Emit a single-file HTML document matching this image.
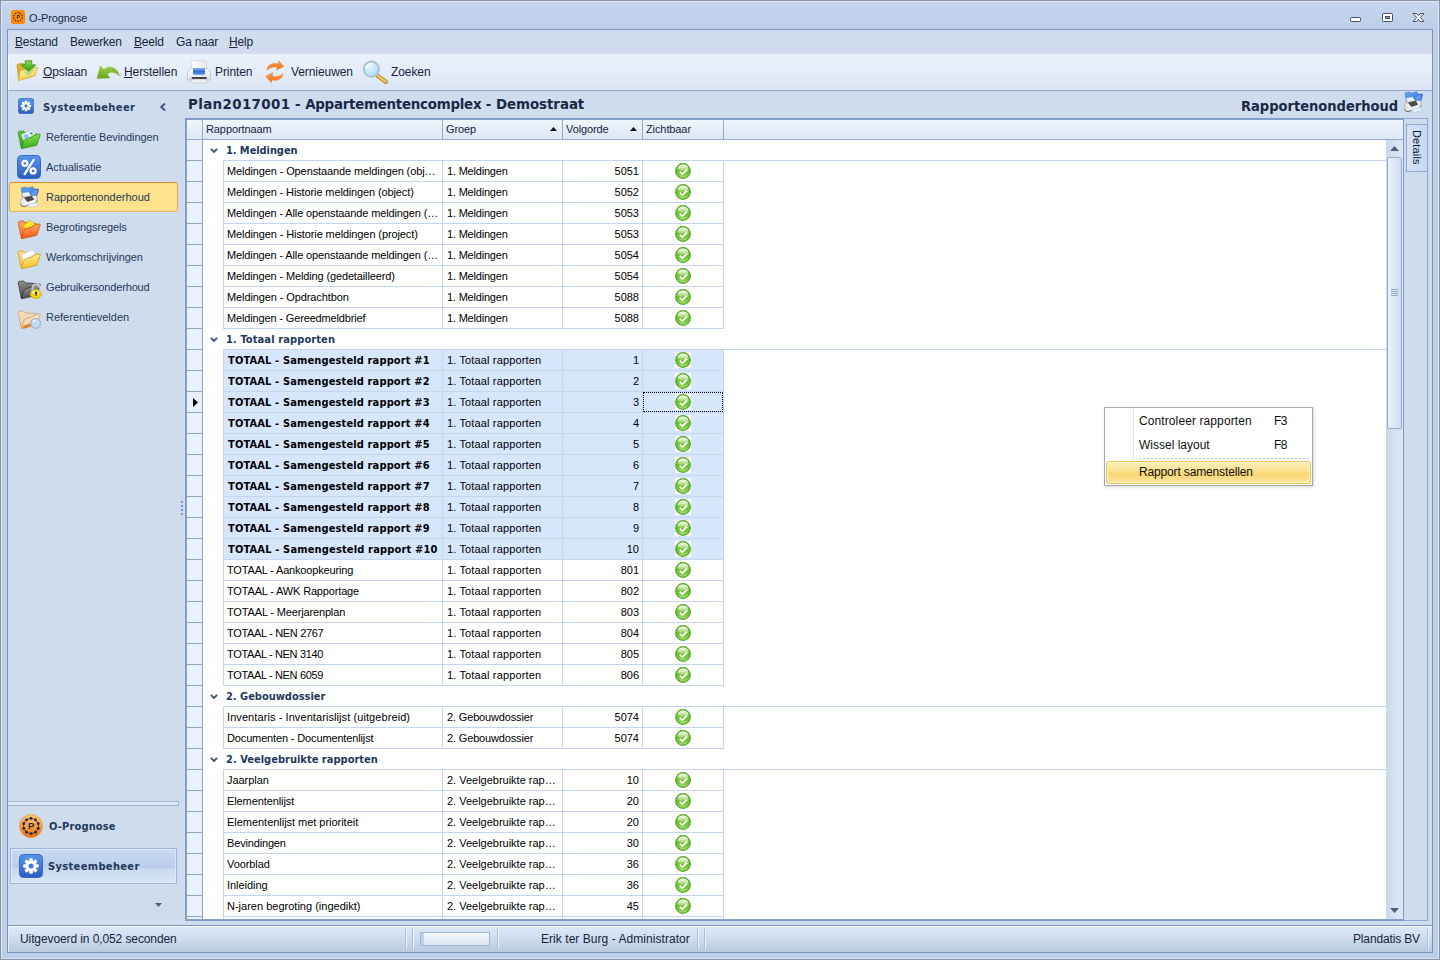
<!DOCTYPE html><html><head><meta charset="utf-8"><title>O-Prognose</title><style>
*{box-sizing:border-box;margin:0;padding:0}
html,body{width:1440px;height:960px;overflow:hidden}
body{position:relative;background:#c1d3eb;font-family:"Liberation Sans",sans-serif;font-size:11px;color:#000;-webkit-font-smoothing:antialiased}
.abs{position:absolute}
.t{position:absolute;white-space:nowrap;line-height:1}
.b{font-family:"DejaVu Sans Condensed","Liberation Sans",sans-serif;font-weight:bold}
#frame{position:absolute;left:0;top:0;width:1440px;height:960px;border:1px solid #8a94a4;background:linear-gradient(#c5d6ed 0,#bdcfe8 29px,#bdcfe8 100%)}
#frame:before{content:"";position:absolute;left:0;top:0;right:0;bottom:0;border:1px solid #dde7f5;border-bottom-color:#d3e0f1}
#inner{position:absolute;left:7px;top:29px;width:1426px;height:924px;border:1px solid #7896be;background:#cfdcee}
#menubar{position:absolute;left:8px;top:30px;width:1424px;height:24px;background:#d1ddee}
#toolbar{position:absolute;left:8px;top:54px;width:1424px;height:37px;background:linear-gradient(#eaf1fb 0,#e6eef9 40%,#dbe5f3 100%);border-bottom:1px solid #8fa7ca;border-left:1px solid #f4f8fd}
.menu{font-size:12px;color:#17233f;top:36px}
.tb{font-size:12px;color:#17233f;top:66px}
u{text-decoration:underline;text-underline-offset:1px}
#status{position:absolute;left:8px;top:925px;width:1424px;height:27px;border-top:1px solid #7896be;background:linear-gradient(#dee8f6 0,#d3dff0 40%,#c4d2e8 75%,#b9c9e2 100%);box-shadow:inset 0 1px 0 #f3f7fc,inset 1px 0 0 #e9f0f9}
.st{font-size:12px;color:#17233f;top:933px}
.vsep{position:absolute;top:928px;width:2px;height:21px;border-left:1px solid #a9bdd8;border-right:1px solid #eef3fa}
.nav{font-size:11px;color:#1e395b}
#sel{position:absolute;left:9px;top:182px;width:169px;height:30px;border:1px solid #e8a84a;border-top-color:#d98a30;border-bottom-color:#eeb758;border-radius:3px;background:#ffe28b}
#grid{position:absolute;left:185px;top:118px;width:1219px;height:803px;border:1px solid #7f9bc3;background:#fff}
#grid:before{content:"";position:absolute;left:0;top:0;right:0;bottom:0;border:1px solid #87a2c8;pointer-events:none}
#ghead{position:absolute;left:187px;top:120px;width:1216px;height:20px;background:linear-gradient(#f1f6fd 0,#e4edf9 55%,#dde8f6 100%);border-bottom:1px solid #93abcd}
.hc{position:absolute;top:120px;height:19px;border-right:1px solid #93abcd}
.ht{font-size:11px;color:#17233f;top:124px;letter-spacing:-.1px}
#ind{position:absolute;left:187px;top:140px;width:16px;height:779px;background:#eaf1fb;border-right:1px solid #8aa3c8}
.il{position:absolute;left:187px;width:15px;height:1px;background:#8aa3c8}
.gl{position:absolute;left:223px;width:1163px;height:1px;background:#c4d5f0}
.rl{position:absolute;left:223px;width:501px;height:1px;background:#c4d5f0}
.vl{position:absolute;width:1px;background:#c4d5f0}
.selbg{position:absolute;left:224px;width:499px;height:20px;background:#d6e6fc}
.gt{font-size:11px;color:#1e395b;left:226px}
.c{font-size:11px;color:#000}
.ck{position:absolute;left:675px;width:16px;height:16px}
#sb{position:absolute;left:1386px;top:140px;width:17px;height:779px;background:linear-gradient(90deg,#c9d8ec 0,#d6e2f1 50%,#dfe8f4 100%)}
#thumb{position:absolute;left:1387px;top:157px;width:15px;height:272px;border:1px solid #94acd0;border-radius:2px;background:linear-gradient(90deg,#e9f0fa 0,#dde7f5 50%,#cfdcf0 100%)}
#dstrip{position:absolute;left:1404px;top:118px;width:24px;height:803px;border:1px solid #8fa7ca;border-left:none;background:#cfdcee}
#dtab{position:absolute;left:1406px;top:124px;width:22px;height:48px;border:1px solid #8fa7ca;background:linear-gradient(90deg,#d6e3f6,#c5d8f3)}
#ctx{position:absolute;left:1104px;top:407px;width:209px;height:79px;border:1px solid #a4a9b0;background:#fff;box-shadow:1px 1px 3px rgba(0,0,0,.18)}
.cm{font-size:12px;color:#111}
</style></head><body>
<div id="frame"></div><div id="inner"></div>
<svg width="0" height="0" style="position:absolute">
<defs>
<linearGradient id="gGreen" x1="0" y1="0" x2="0" y2="1"><stop offset="0" stop-color="#c9ebb0"/><stop offset=".3" stop-color="#8fd157"/><stop offset=".55" stop-color="#67bf25"/><stop offset=".8" stop-color="#86d04c"/><stop offset="1" stop-color="#c3ea9e"/></linearGradient>
<linearGradient id="gGloss" x1="0" y1="0" x2="0" y2="1"><stop offset="0" stop-color="#fff" stop-opacity=".85"/><stop offset="1" stop-color="#fff" stop-opacity=".1"/></linearGradient>
<linearGradient id="gBlue" x1="0" y1="0" x2="0" y2="1"><stop offset="0" stop-color="#5b95ea"/><stop offset="1" stop-color="#2b5cbf"/></linearGradient>
<linearGradient id="gOr" x1="0" y1="0" x2="0" y2="1"><stop offset="0" stop-color="#ffb24a"/><stop offset="1" stop-color="#e8741a"/></linearGradient>


</defs></svg>
<svg class="abs" style="left:11px;top:10px" width="14" height="14" viewBox="0 0 14 14"><rect width="14" height="14" rx="2.5" fill="#ff8c00"/><g fill="#2a2a55"><circle cx="7.00" cy="2.70" r=".75"/><circle cx="9.53" cy="3.52" r=".75"/><circle cx="11.09" cy="5.67" r=".75"/><circle cx="11.09" cy="8.33" r=".75"/><circle cx="9.53" cy="10.48" r=".75"/><circle cx="7.00" cy="11.30" r=".75"/><circle cx="4.47" cy="10.48" r=".75"/><circle cx="2.91" cy="8.33" r=".75"/><circle cx="2.91" cy="5.67" r=".75"/><circle cx="4.47" cy="3.52" r=".75"/></g><text x="7.1" y="8.8" font-size="5" font-weight="bold" text-anchor="middle" fill="#2a2a55" font-family="Liberation Sans, sans-serif">P</text></svg>
<span class="t" style="left:29px;top:13px;font-size:11px;letter-spacing:-.1px;color:#1a2848">O-Prognose</span>
<svg class="abs" style="left:1349px;top:12px" width="78" height="12" viewBox="0 0 78 12"><g fill="#fff" stroke="#4a4a66" stroke-width="1"><rect x="1.5" y="5.5" width="10" height="4" rx="1"/><rect x="33.5" y="1.5" width="10" height="8" rx="1"/><rect x="36.5" y="4.5" width="4" height="2" fill="#8fa3c4"/></g><path d="M64 1.5 h3.7 l1.8 2.1 l1.8-2.1 h3.7 l-3.7 4 l3.7 4 h-3.7 l-1.8-2.1 l-1.8 2.1 h-3.7 l3.7-4z" fill="#fff" stroke="#4a4a66" stroke-width="1" stroke-linejoin="round"/></svg>
<div id="menubar"></div>
<span class="t menu" style="left:15px;letter-spacing:-.2px"><u>B</u>estand</span>
<span class="t menu" style="left:70px;letter-spacing:-.2px">Bewerken</span>
<span class="t menu" style="left:134px;letter-spacing:-.2px"><u>B</u>eeld</span>
<span class="t menu" style="left:176px;letter-spacing:-.2px">Ga naar</span>
<span class="t menu" style="left:229px;letter-spacing:-.2px"><u>H</u>elp</span>
<div id="toolbar"></div>
<span class="t tb" style="left:43px;letter-spacing:-.08px"><u>O</u>pslaan</span>
<span class="t tb" style="left:124px;letter-spacing:-.08px"><u>H</u>erstellen</span>
<span class="t tb" style="left:215px;letter-spacing:-.08px">Printen</span>
<span class="t tb" style="left:291px;letter-spacing:-.08px">Vernieuwen</span>
<span class="t tb" style="left:391px;letter-spacing:-.08px">Zoeken</span>
<svg class="abs" style="left:15px;top:59px" width="26" height="24" viewBox="0 0 26 24">
<defs><linearGradient id="fy" x1="0" y1="0" x2=".4" y2="1"><stop offset="0" stop-color="#fff7b8"/><stop offset=".6" stop-color="#fbe27a"/><stop offset="1" stop-color="#eebf3a"/></linearGradient>
<linearGradient id="ga" x1="0" y1="0" x2="0" y2="1"><stop offset="0" stop-color="#86e052"/><stop offset="1" stop-color="#2a9a10"/></linearGradient></defs>
<path d="M2 6.2 Q2 5.3 2.9 5.1 L8 4.3 L10 6 L17.5 6.5 L17.5 12 L3.6 21.3z" fill="#dfae2f" stroke="#c6961f" stroke-width=".7" stroke-linejoin="round"/>
<path d="M3.4 21.6 L5 12.4 Q5.1 11.7 5.9 11.5 L22 8.2 Q22.9 8.1 22.6 9 L20.2 16.2 Q20 16.9 19.2 17.2z" fill="url(#fy)" stroke="#d3a62e" stroke-width=".7" stroke-linejoin="round"/>
<path d="M8.6 12.6 L13.4 17 L20.3 9.4 L18.4 9.6 L13.5 14 L10.3 12z" fill="#a2e072" opacity=".9"/>
<path d="M10.2 1.8 h6.6 v4.1 h4 L13.6 12.6 L6.3 5.9 H10.2z" fill="url(#ga)" stroke="#2c8a12" stroke-width=".8" stroke-linejoin="round"/>
</svg>
<svg class="abs" style="left:95px;top:62px" width="26" height="20" viewBox="0 0 26 20">
<defs><linearGradient id="gu" x1="0" y1="0" x2="0" y2="1"><stop offset="0" stop-color="#9bcf45"/><stop offset="1" stop-color="#69a61c"/></linearGradient></defs>
<path d="M5.4 4.2 L2 16.5 L14.8 15.9 L12.2 12 C15 9.6 20 9.2 24.3 13.8 C22.6 6 15 2.4 9 7.5 Z" fill="url(#gu)" stroke="#72ad22" stroke-width=".5" stroke-linejoin="round"/>
</svg>
<svg class="abs" style="left:187px;top:60px" width="24" height="24" viewBox="0 0 24 24">
<defs><linearGradient id="pb" x1="0" y1="0" x2="0" y2="1"><stop offset="0" stop-color="#ffffff"/><stop offset="1" stop-color="#dfe2e7"/></linearGradient>
<linearGradient id="pbl" x1="0" y1="0" x2="0" y2="1"><stop offset="0" stop-color="#8bb9f3"/><stop offset=".5" stop-color="#2f6fd8"/><stop offset="1" stop-color="#5a97ea"/></linearGradient>
<linearGradient id="pp" x1="0" y1="0" x2="1" y2="0"><stop offset="0" stop-color="#ffffff"/><stop offset="1" stop-color="#e3e4e6"/></linearGradient></defs>
<rect x="4.7" y=".8" width="15" height="8.5" rx=".8" fill="url(#pp)" stroke="#d3d5d9" stroke-width=".7"/>
<path d="M4.2 8.6 H19.8 Q20.6 8.6 21.2 9.4 L23.4 12.3 Q23.7 12.8 23.7 13.4 V19 Q23.7 20 22.7 20 H1.3 Q.3 20 .3 19 V13.4 Q.3 12.8 .6 12.3 L2.8 9.4 Q3.4 8.6 4.2 8.6z" fill="url(#pb)" stroke="#b3b8c0" stroke-width=".8"/>
<rect x="6" y="8" width="12" height="6.8" rx="1" fill="url(#pbl)"/>
<rect x="4.7" y="17.2" width="15" height="1.9" fill="#1c1c1c"/>
<path d="M4.3 19.1 H19.9 L20.6 22.5 Q20.6 23 20 23 H4.4 Q3.8 23 3.8 22.5z" fill="#eceded" stroke="#c2c6cc" stroke-width=".7"/>
</svg>
<svg class="abs" style="left:264px;top:60px" width="22" height="24" viewBox="0 0 22 24">
<defs><linearGradient id="gr" x1="0" y1="0" x2="0" y2="1"><stop offset="0" stop-color="#fa9a44"/><stop offset="1" stop-color="#ee7420"/></linearGradient></defs>
<path d="M2.9 10 C3.6 4.6 9 2.4 14.2 4 L14.7 .9 L19.9 6.4 L12.6 9.9 L13.2 7.3 C9.4 6.3 5.9 7.4 2.9 10z" fill="url(#gr)" stroke="#ee7a26" stroke-width=".5" stroke-linejoin="round"/>
<path d="M19 13.7 C18.3 19.2 13 21.3 7.9 19.7 L7.6 22.8 L1.7 16.4 L8.6 12.6 L8.4 16.3 C12.2 17.3 16 16.3 19 13.7z" fill="url(#gr)" stroke="#ee7a26" stroke-width=".5" stroke-linejoin="round"/>
</svg>
<svg class="abs" style="left:361px;top:59px" width="28" height="26" viewBox="0 0 28 26">
<defs><radialGradient id="lens" cx=".4" cy=".35" r=".75"><stop offset="0" stop-color="#eaf7ff"/><stop offset=".6" stop-color="#bfe2fa"/><stop offset="1" stop-color="#8fcaf2"/></radialGradient></defs>
<path d="M16 16.4 L24.8 22.8" stroke="#b5882c" stroke-width="4.2" stroke-linecap="round"/>
<path d="M16.8 16.8 L24.6 22.5" stroke="#f3c960" stroke-width="2.2" stroke-linecap="round"/>
<circle cx="10.4" cy="10.2" r="7.7" fill="url(#lens)" stroke="#b0c1cf" stroke-width="1.8"/>
<path d="M5.2 8.4 Q7 4.6 11 4.7" fill="none" stroke="#fff" stroke-width="1.5" stroke-linecap="round" opacity=".95"/>
</svg>
<svg class="abs" style="left:18px;top:98px" width="16" height="16" viewBox="0 0 24 24"><rect x=".5" y=".5" width="23" height="23" rx="4" fill="url(#gBlue)" stroke="#3667c4" stroke-width="1"/><g fill="#fff"><circle cx="12" cy="12" r="5.2"/><g><rect x="10.2" y="4.2" width="3.6" height="15.6" rx=".8"/><rect x="10.2" y="4.2" width="3.6" height="15.6" rx=".8" transform="rotate(45 12 12)"/><rect x="10.2" y="4.2" width="3.6" height="15.6" rx=".8" transform="rotate(90 12 12)"/><rect x="10.2" y="4.2" width="3.6" height="15.6" rx=".8" transform="rotate(135 12 12)"/></g></g><circle cx="12" cy="12" r="2.5" fill="#3f77d6"/></svg>
<span class="t b" style="left:43px;top:102px;font-size:11px;color:#1e395b;letter-spacing:.4px">Systeembeheer</span>
<svg class="abs" style="left:159px;top:102px" width="8" height="10" viewBox="0 0 8 10"><path d="M6 1.5 L2.2 5 L6 8.5" fill="none" stroke="#3d5275" stroke-width="1.8"/></svg>
<div id="sel"></div>
<span class="t nav" style="left:46px;top:132px;letter-spacing:-0.08px">Referentie Bevindingen</span>
<span class="t nav" style="left:46px;top:162px;letter-spacing:-0.08px">Actualisatie</span>
<span class="t nav" style="left:46px;top:192px;letter-spacing:0px">Rapportenonderhoud</span>
<span class="t nav" style="left:46px;top:222px;letter-spacing:-0.12px">Begrotingsregels</span>
<span class="t nav" style="left:46px;top:252px;letter-spacing:-0.12px">Werkomschrijvingen</span>
<span class="t nav" style="left:46px;top:282px;letter-spacing:-0.15px">Gebruikersonderhoud</span>
<span class="t nav" style="left:46px;top:312px;letter-spacing:0px">Referentievelden</span>
<svg class="abs" style="left:17px;top:125px" width="24" height="24" viewBox="0 0 24 24">
<defs><linearGradient id="f125" x1="0" y1="0" x2=".15" y2="1"><stop offset="0" stop-color="#8be05a"/><stop offset="1" stop-color="#3bb015"/></linearGradient>
<linearGradient id="f125b" x1="0" y1="0" x2="0" y2="1"><stop offset="0" stop-color="#5dc232"/><stop offset="1" stop-color="#3ca31a"/></linearGradient></defs>
<path d="M1.2 7.6 Q1.2 6.7 2.1 6.4 L6.2 6 Q7.1 6 7.6 6.8 L8.3 7.8 L19.4 8.6 L19 12.5 L6.8 17 L4.9 23.5 Q4.4 23.8 4.2 23z" fill="url(#f125b)" stroke="#2f8a12" stroke-width=".7" stroke-linejoin="round"/>
<path d="M4 9.8 L13.5 5.2 Q14.5 4.9 15.2 5.6 L19 9 L7 16.4z" fill="#eef6ff" stroke="#8fb0d4" stroke-width=".5" stroke-linejoin="round"/><path d="M6.2 10.6 L10.6 8.6 L12.4 11.8 L8 13.9z" fill="#8fc3f5"/><path d="M12.2 7.7 L15.6 7.2 L15 10.8z" fill="#2878dc"/><path d="M13.3 9.6 L16.6 8.2 L17.6 9.6 L14.5 11.2z" fill="#bfe59a"/>
<path d="M6.4 16.4 L8.6 13.9 L14.5 12 L18.9 9.6 L22.6 9 Q23.5 9 23.2 9.9 L20 19.6 Q19.8 20.2 19.1 20.4 L5.4 23.6 Q4.6 23.7 4.9 22.8z" fill="url(#f125)" stroke="#2f8a12" stroke-width=".7" stroke-linejoin="round"/>
</svg>
<svg class="abs" style="left:17px;top:155px" width="24" height="24" viewBox="0 0 24 24"><rect x=".5" y=".5" width="23" height="23" rx="4" fill="url(#gBlue)" stroke="#3667c4"/><g fill="none" stroke="#fff" stroke-width="2.2"><circle cx="7.9" cy="8.3" r="2.5"/><circle cx="16.1" cy="15.9" r="2.5"/><path d="M16.6 5 L7.6 19.2" stroke-linecap="round"/></g></svg>
<svg class="abs" style="left:20px;top:186px" width="20" height="22" viewBox="0 0 20 22">
<defs><linearGradient id="bf1" x1="0" y1="0" x2="1" y2="1"><stop offset="0" stop-color="#6aa8f4"/><stop offset="1" stop-color="#2f6ed6"/></linearGradient>
<linearGradient id="pg1" x1="0" y1="0" x2="1" y2="0"><stop offset="0" stop-color="#d9d9d9"/><stop offset=".35" stop-color="#f6f6f6"/><stop offset=".8" stop-color="#fdfdfd"/><stop offset="1" stop-color="#cfcfcf"/></linearGradient></defs>
<path d="M1.2 1.9 L5.9 1 L7.1 2.3 L12.7 .7 L14 2.9 L18.7 3.2 L17.1 9.6 L2.4 10.8z" fill="url(#bf1)" stroke="#2d67cf" stroke-width=".5" stroke-linejoin="round"/>
<path d="M10.2 6.6 L14.6 3.5 L18.2 3.6 L16.8 9.4 L12 9.8z" fill="#5c9bf0" stroke="#2557c0" stroke-width=".5" stroke-linejoin="round"/>
<path d="M2.1 7.3 L8.7 6 L11 9.8 L3.4 11.2z" fill="#e9f3ff" stroke="#b9d3f3" stroke-width=".4"/>
<path d="M.3 17.9 L.3 13.6 Q.4 12.5 1.4 12.2 L11.5 9.7 L15.7 9.7 Q16.9 9.8 17.2 11 L17.5 15.6 Q17.4 16.3 16.6 16.6 L7.4 19.5 L3.3 20.5 Q2.6 20.6 2 20z" fill="url(#pg1)" stroke="#9a9a9a" stroke-width=".5" stroke-linejoin="round"/>
<path d="M.3 17.5 L2 19.6 Q2.8 20.4 3.6 20.2 L7.4 19.3 L7.4 20 L3.3 21 Q2.4 21 1.8 20.3 L.3 18.4z" fill="#555"/>
<path d="M4.3 11.7 L11.8 10.1 L14 13.5 L7.4 15.7z" fill="#4a4a4a" stroke="#333" stroke-width=".4" stroke-linejoin="round"/>
<path d="M7.4 18.4 L15.9 16.8 L18.6 19.4 L10.3 21.6z" fill="#eaf4ff" stroke="#9fb9d8" stroke-width=".5" stroke-linejoin="round"/>
<circle cx="16.4" cy="15.2" r=".8" fill="#2fd02f"/>
</svg>
<svg class="abs" style="left:17px;top:215px" width="24" height="24" viewBox="0 0 24 24">
<defs><linearGradient id="f215" x1="0" y1="0" x2=".15" y2="1"><stop offset="0" stop-color="#fbb072"/><stop offset="1" stop-color="#ff5a14"/></linearGradient>
<linearGradient id="f215b" x1="0" y1="0" x2="0" y2="1"><stop offset="0" stop-color="#ffa468"/><stop offset="1" stop-color="#ff6a1c"/></linearGradient></defs>
<path d="M1.2 7.6 Q1.2 6.7 2.1 6.4 L6.2 6 Q7.1 6 7.6 6.8 L8.3 7.8 L19.4 8.6 L19 12.5 L6.8 17 L4.9 23.5 Q4.4 23.8 4.2 23z" fill="url(#f215b)" stroke="#b9500c" stroke-width=".7" stroke-linejoin="round"/>
<path d="M6.1 10.4 L10.1 7.9 L12.6 4.5 L14.5 6.7 L18.9 9.2 L14.5 11.7 L12 13.8 L7.9 13.4z" fill="#ffe91e" stroke="#e9960c" stroke-width=".5" stroke-linejoin="round"/>
<path d="M6.4 16.4 L8.6 13.9 L14.5 12 L18.9 9.6 L22.6 9 Q23.5 9 23.2 9.9 L20 19.6 Q19.8 20.2 19.1 20.4 L5.4 23.6 Q4.6 23.7 4.9 22.8z" fill="url(#f215)" stroke="#b9500c" stroke-width=".7" stroke-linejoin="round"/>
</svg>
<svg class="abs" style="left:17px;top:245px" width="24" height="24" viewBox="0 0 24 24">
<defs><linearGradient id="f245" x1="0" y1="0" x2=".15" y2="1"><stop offset="0" stop-color="#fff3a4"/><stop offset="1" stop-color="#f6bf22"/></linearGradient>
<linearGradient id="f245b" x1="0" y1="0" x2="0" y2="1"><stop offset="0" stop-color="#ffe57a"/><stop offset="1" stop-color="#f6c42a"/></linearGradient></defs>
<path d="M1.2 7.6 Q1.2 6.7 2.1 6.4 L6.2 6 Q7.1 6 7.6 6.8 L8.3 7.8 L19.4 8.6 L19 12.5 L6.8 17 L4.9 23.5 Q4.4 23.8 4.2 23z" fill="url(#f245b)" stroke="#c98f12" stroke-width=".7" stroke-linejoin="round"/>
<path d="M4.2 9.5 L15.75 4.8 L18.9 8.9 L6.4 16.4z" fill="#f4f4f4" stroke="#c4c4c4" stroke-width=".5" stroke-linejoin="round"/><path d="M5 10 L15.4 5.8 L17 8 L6.6 13z" fill="#fff"/>
<path d="M6.4 16.4 L8.6 13.9 L14.5 12 L18.9 9.6 L22.6 9 Q23.5 9 23.2 9.9 L20 19.6 Q19.8 20.2 19.1 20.4 L5.4 23.6 Q4.6 23.7 4.9 22.8z" fill="url(#f245)" stroke="#c98f12" stroke-width=".7" stroke-linejoin="round"/>
</svg>
<svg class="abs" style="left:17px;top:275px" width="24" height="24" viewBox="0 0 24 24">
<defs><linearGradient id="f275" x1="0" y1="0" x2=".15" y2="1"><stop offset="0" stop-color="#a6a6a6"/><stop offset="1" stop-color="#4c4c4c"/></linearGradient>
<linearGradient id="f275b" x1="0" y1="0" x2="0" y2="1"><stop offset="0" stop-color="#8c8c8c"/><stop offset="1" stop-color="#4a4a4a"/></linearGradient></defs>
<path d="M1.2 7.6 Q1.2 6.7 2.1 6.4 L6.2 6 Q7.1 6 7.6 6.8 L8.3 7.8 L19.4 8.6 L19 12.5 L6.8 17 L4.9 23.5 Q4.4 23.8 4.2 23z" fill="url(#f275b)" stroke="#2a2a2a" stroke-width=".7" stroke-linejoin="round"/>

<path d="M6.4 16.4 L8.6 13.9 L14.5 12 L18.9 9.6 L22.6 9 Q23.5 9 23.2 9.9 L20 19.6 Q19.8 20.2 19.1 20.4 L5.4 23.6 Q4.6 23.7 4.9 22.8z" fill="url(#f275)" stroke="#2a2a2a" stroke-width=".7" stroke-linejoin="round"/>
</svg>
<svg class="abs" style="left:29px;top:283px" width="14" height="16" viewBox="0 0 14 16"><path d="M3.6 8 V5.4 Q3.6 1.6 7.2 1.6 Q10.6 1.6 10.6 5" fill="none" stroke="#d4d6d9" stroke-width="2"/><path d="M3.6 8 V5.4 Q3.6 1.6 7.2 1.6 Q10.6 1.6 10.6 5" fill="none" stroke="#9a9ea4" stroke-width=".6"/><ellipse cx="6.8" cy="11" rx="5.5" ry="4.5" fill="#f4d516" stroke="#c9a208" stroke-width=".7"/><ellipse cx="6.2" cy="9" rx="3.4" ry="1.6" fill="#fff19a" opacity=".8"/><rect x="6.4" y="9.2" width="1.3" height="3.4" fill="#222"/><circle cx="7" cy="9.6" r="1.1" fill="#222"/></svg>
<svg class="abs" style="left:17px;top:305px" width="24" height="24" viewBox="0 0 24 24">
<defs><linearGradient id="f305" x1="0" y1="0" x2=".15" y2="1"><stop offset="0" stop-color="#fde9d2"/><stop offset="1" stop-color="#f0c9a0"/></linearGradient>
<linearGradient id="f305b" x1="0" y1="0" x2="0" y2="1"><stop offset="0" stop-color="#f9dcc0"/><stop offset="1" stop-color="#ecc49a"/></linearGradient></defs>
<path d="M1.2 7.6 Q1.2 6.7 2.1 6.4 L6.2 6 Q7.1 6 7.6 6.8 L8.3 7.8 L19.4 8.6 L19 12.5 L6.8 17 L4.9 23.5 Q4.4 23.8 4.2 23z" fill="url(#f305b)" stroke="#c39a70" stroke-width=".7" stroke-linejoin="round"/>

<path d="M6.4 16.4 L8.6 13.9 L14.5 12 L18.9 9.6 L22.6 9 Q23.5 9 23.2 9.9 L20 19.6 Q19.8 20.2 19.1 20.4 L5.4 23.6 Q4.6 23.7 4.9 22.8z" fill="url(#f305)" stroke="#c39a70" stroke-width=".7" stroke-linejoin="round"/>
</svg>
<svg class="abs" style="left:18px;top:316px" width="24" height="16" viewBox="0 0 24 16"><path d="M13 8.6 L6.3 11" stroke="#e07a22" stroke-width="2.6" stroke-linecap="round"/><circle cx="17.7" cy="7.4" r="4.8" fill="#b9e0fb" stroke="#a9b5c4" stroke-width="1.4"/><path d="M14.8 5.8 Q16 3.8 18.2 4" stroke="#fff" stroke-width="1.1" fill="none" stroke-linecap="round"/></svg>
<div class="abs" style="left:8px;top:801px;width:171px;height:5px;border:1px solid #9cb3d4;border-left:none;background:#dfe8f5"></div>
<svg class="abs" style="left:19px;top:814px" width="24" height="24" viewBox="0 0 24 24"><defs><linearGradient id="og" x1="0" y1="0" x2="0" y2="1"><stop offset="0" stop-color="#ffc677"/><stop offset=".55" stop-color="#f79a35"/><stop offset="1" stop-color="#e8720f"/></linearGradient></defs><circle cx="12" cy="12" r="11.5" fill="url(#og)" stroke="#e28a33" stroke-width=".6"/><circle cx="12" cy="12" r="7.6" fill="none" stroke="#26264a" stroke-width=".7"/><g fill="#26264a"><circle cx="12.00" cy="4.40" r="1.45"/><circle cx="16.47" cy="5.85" r="1.45"/><circle cx="19.23" cy="9.65" r="1.45"/><circle cx="19.23" cy="14.35" r="1.45"/><circle cx="16.47" cy="18.15" r="1.45"/><circle cx="12.00" cy="19.60" r="1.45"/><circle cx="7.53" cy="18.15" r="1.45"/><circle cx="4.77" cy="14.35" r="1.45"/><circle cx="4.77" cy="9.65" r="1.45"/><circle cx="7.53" cy="5.85" r="1.45"/></g><text x="12.2" y="15.3" font-size="9.5" font-weight="bold" text-anchor="middle" fill="#26264a" font-family="Liberation Sans, sans-serif">P</text></svg>
<span class="t b" style="left:49px;top:821px;font-size:11px;color:#1e395b;letter-spacing:.15px">O-Prognose</span>
<div class="abs" style="left:10px;top:848px;width:167px;height:36px;border:1px solid #9fb6d8;background:linear-gradient(#cadbf2 0,#b8cdea 54%,#c9dbf2 60%,#dae6f6 100%);box-shadow:inset 0 0 0 1px #dde8f8"></div>
<svg class="abs" style="left:19px;top:854px" width="24" height="24" viewBox="0 0 24 24"><rect x=".5" y=".5" width="23" height="23" rx="4" fill="url(#gBlue)" stroke="#3667c4" stroke-width="1"/><g fill="#fff"><circle cx="12" cy="12" r="5.2"/><g><rect x="10.2" y="4.2" width="3.6" height="15.6" rx=".8"/><rect x="10.2" y="4.2" width="3.6" height="15.6" rx=".8" transform="rotate(45 12 12)"/><rect x="10.2" y="4.2" width="3.6" height="15.6" rx=".8" transform="rotate(90 12 12)"/><rect x="10.2" y="4.2" width="3.6" height="15.6" rx=".8" transform="rotate(135 12 12)"/></g></g><circle cx="12" cy="12" r="2.5" fill="#3f77d6"/></svg>
<span class="t b" style="left:48px;top:861px;font-size:11px;color:#1e395b;letter-spacing:.35px">Systeembeheer</span>
<svg class="abs" style="left:155px;top:903px" width="7" height="4" viewBox="0 0 7 4"><path d="M0 0 H7 L3.5 4z" fill="#4d5f80"/></svg>
<div class="abs" style="left:181px;top:501px;width:2px;height:2px;background:#7d98be"></div>
<div class="abs" style="left:181px;top:505px;width:2px;height:2px;background:#7d98be"></div>
<div class="abs" style="left:181px;top:509px;width:2px;height:2px;background:#7d98be"></div>
<div class="abs" style="left:181px;top:513px;width:2px;height:2px;background:#7d98be"></div>
<span class="t b" style="left:188px;top:97px;font-size:14.9px;color:#1a2848;letter-spacing:-.06px"><span style="letter-spacing:.38px">Plan2017001</span> - <span style="letter-spacing:-.26px">Appartementencomplex</span> - Demostraat</span>
<span class="t b" style="left:1241px;top:99px;font-size:14.5px;color:#1a2848">Rapportenonderhoud</span>
<svg class="abs" style="left:1404px;top:91px" width="20" height="22" viewBox="0 0 20 22">
<defs><linearGradient id="bf2" x1="0" y1="0" x2="1" y2="1"><stop offset="0" stop-color="#6aa8f4"/><stop offset="1" stop-color="#2f6ed6"/></linearGradient>
<linearGradient id="pg2" x1="0" y1="0" x2="1" y2="0"><stop offset="0" stop-color="#d9d9d9"/><stop offset=".35" stop-color="#f6f6f6"/><stop offset=".8" stop-color="#fdfdfd"/><stop offset="1" stop-color="#cfcfcf"/></linearGradient></defs>
<path d="M1.2 1.9 L5.9 1 L7.1 2.3 L12.7 .7 L14 2.9 L18.7 3.2 L17.1 9.6 L2.4 10.8z" fill="url(#bf2)" stroke="#2d67cf" stroke-width=".5" stroke-linejoin="round"/>
<path d="M10.2 6.6 L14.6 3.5 L18.2 3.6 L16.8 9.4 L12 9.8z" fill="#5c9bf0" stroke="#2557c0" stroke-width=".5" stroke-linejoin="round"/>
<path d="M2.1 7.3 L8.7 6 L11 9.8 L3.4 11.2z" fill="#e9f3ff" stroke="#b9d3f3" stroke-width=".4"/>
<path d="M.3 17.9 L.3 13.6 Q.4 12.5 1.4 12.2 L11.5 9.7 L15.7 9.7 Q16.9 9.8 17.2 11 L17.5 15.6 Q17.4 16.3 16.6 16.6 L7.4 19.5 L3.3 20.5 Q2.6 20.6 2 20z" fill="url(#pg2)" stroke="#9a9a9a" stroke-width=".5" stroke-linejoin="round"/>
<path d="M.3 17.5 L2 19.6 Q2.8 20.4 3.6 20.2 L7.4 19.3 L7.4 20 L3.3 21 Q2.4 21 1.8 20.3 L.3 18.4z" fill="#555"/>
<path d="M4.3 11.7 L11.8 10.1 L14 13.5 L7.4 15.7z" fill="#4a4a4a" stroke="#333" stroke-width=".4" stroke-linejoin="round"/>
<path d="M7.4 18.4 L15.9 16.8 L18.6 19.4 L10.3 21.6z" fill="#eaf4ff" stroke="#9fb9d8" stroke-width=".5" stroke-linejoin="round"/>
<circle cx="16.4" cy="15.2" r=".8" fill="#2fd02f"/>
</svg>
<div id="grid"></div><div id="ghead"></div>
<div class="hc" style="left:187px;width:16px"></div>
<div class="hc" style="left:203px;width:240px"></div>
<div class="hc" style="left:443px;width:120px"></div>
<div class="hc" style="left:563px;width:80px"></div>
<div class="hc" style="left:643px;width:81px"></div>
<span class="t ht" style="left:206px">Rapportnaam</span>
<span class="t ht" style="left:446px">Groep</span>
<span class="t ht" style="left:566px">Volgorde</span>
<span class="t ht" style="left:646px">Zichtbaar</span>
<svg class="abs" style="left:550px;top:127px" width="7" height="4" viewBox="0 0 7 4"><path d="M3.5 0 L7 4 H0z" fill="#111"/></svg>
<svg class="abs" style="left:630px;top:127px" width="7" height="4" viewBox="0 0 7 4"><path d="M3.5 0 L7 4 H0z" fill="#111"/></svg>
<div id="ind"></div>
<svg class="abs" style="left:210px;top:148px" width="8" height="6" viewBox="0 0 8 6"><path d="M.9 .8 L4 4 L7.1 .8" fill="none" stroke="#3f5375" stroke-width="1.9"/></svg>
<span class="t b gt" style="top:145px;letter-spacing:-0.077px">1. Meldingen</span>
<div class="gl" style="top:160px"></div>
<div class="il" style="top:160px"></div>
<span class="t c" style="left:227px;top:166px;letter-spacing:-0.113px">Meldingen - Openstaande meldingen (obj…</span>
<span class="t c" style="left:447px;top:166px;letter-spacing:-0.2px">1. Meldingen</span>
<span class="t c" style="right:801px;top:166px">5051</span>
<svg class="ck" style="top:163px" viewBox="0 0 16 16"><rect width="16" height="16" fill="#fff"/><circle cx="8" cy="8" r="7.25" fill="url(#gGreen)" stroke="#57a724" stroke-width="1.3"/><ellipse cx="8" cy="4.9" rx="5" ry="3.3" fill="url(#gGloss)"/><path d="M4.7 8.6 L7.3 11.1 L12.2 6.5" fill="none" stroke="#fff" stroke-width="1.8" stroke-linecap="butt" stroke-linejoin="miter"/></svg>
<div class="rl" style="top:181px"></div>
<div class="il" style="top:181px"></div>
<span class="t c" style="left:227px;top:187px;letter-spacing:-0.12px">Meldingen - Historie meldingen (object)</span>
<span class="t c" style="left:447px;top:187px;letter-spacing:-0.2px">1. Meldingen</span>
<span class="t c" style="right:801px;top:187px">5052</span>
<svg class="ck" style="top:184px" viewBox="0 0 16 16"><rect width="16" height="16" fill="#fff"/><circle cx="8" cy="8" r="7.25" fill="url(#gGreen)" stroke="#57a724" stroke-width="1.3"/><ellipse cx="8" cy="4.9" rx="5" ry="3.3" fill="url(#gGloss)"/><path d="M4.7 8.6 L7.3 11.1 L12.2 6.5" fill="none" stroke="#fff" stroke-width="1.8" stroke-linecap="butt" stroke-linejoin="miter"/></svg>
<div class="rl" style="top:202px"></div>
<div class="il" style="top:202px"></div>
<span class="t c" style="left:227px;top:208px;letter-spacing:-0.131px">Meldingen - Alle openstaande meldingen (…</span>
<span class="t c" style="left:447px;top:208px;letter-spacing:-0.2px">1. Meldingen</span>
<span class="t c" style="right:801px;top:208px">5053</span>
<svg class="ck" style="top:205px" viewBox="0 0 16 16"><rect width="16" height="16" fill="#fff"/><circle cx="8" cy="8" r="7.25" fill="url(#gGreen)" stroke="#57a724" stroke-width="1.3"/><ellipse cx="8" cy="4.9" rx="5" ry="3.3" fill="url(#gGloss)"/><path d="M4.7 8.6 L7.3 11.1 L12.2 6.5" fill="none" stroke="#fff" stroke-width="1.8" stroke-linecap="butt" stroke-linejoin="miter"/></svg>
<div class="rl" style="top:223px"></div>
<div class="il" style="top:223px"></div>
<span class="t c" style="left:227px;top:229px;letter-spacing:-0.108px">Meldingen - Historie meldingen (project)</span>
<span class="t c" style="left:447px;top:229px;letter-spacing:-0.2px">1. Meldingen</span>
<span class="t c" style="right:801px;top:229px">5053</span>
<svg class="ck" style="top:226px" viewBox="0 0 16 16"><rect width="16" height="16" fill="#fff"/><circle cx="8" cy="8" r="7.25" fill="url(#gGreen)" stroke="#57a724" stroke-width="1.3"/><ellipse cx="8" cy="4.9" rx="5" ry="3.3" fill="url(#gGloss)"/><path d="M4.7 8.6 L7.3 11.1 L12.2 6.5" fill="none" stroke="#fff" stroke-width="1.8" stroke-linecap="butt" stroke-linejoin="miter"/></svg>
<div class="rl" style="top:244px"></div>
<div class="il" style="top:244px"></div>
<span class="t c" style="left:227px;top:250px;letter-spacing:-0.131px">Meldingen - Alle openstaande meldingen (…</span>
<span class="t c" style="left:447px;top:250px;letter-spacing:-0.2px">1. Meldingen</span>
<span class="t c" style="right:801px;top:250px">5054</span>
<svg class="ck" style="top:247px" viewBox="0 0 16 16"><rect width="16" height="16" fill="#fff"/><circle cx="8" cy="8" r="7.25" fill="url(#gGreen)" stroke="#57a724" stroke-width="1.3"/><ellipse cx="8" cy="4.9" rx="5" ry="3.3" fill="url(#gGloss)"/><path d="M4.7 8.6 L7.3 11.1 L12.2 6.5" fill="none" stroke="#fff" stroke-width="1.8" stroke-linecap="butt" stroke-linejoin="miter"/></svg>
<div class="rl" style="top:265px"></div>
<div class="il" style="top:265px"></div>
<span class="t c" style="left:227px;top:271px;letter-spacing:-0.135px">Meldingen - Melding (gedetailleerd)</span>
<span class="t c" style="left:447px;top:271px;letter-spacing:-0.2px">1. Meldingen</span>
<span class="t c" style="right:801px;top:271px">5054</span>
<svg class="ck" style="top:268px" viewBox="0 0 16 16"><rect width="16" height="16" fill="#fff"/><circle cx="8" cy="8" r="7.25" fill="url(#gGreen)" stroke="#57a724" stroke-width="1.3"/><ellipse cx="8" cy="4.9" rx="5" ry="3.3" fill="url(#gGloss)"/><path d="M4.7 8.6 L7.3 11.1 L12.2 6.5" fill="none" stroke="#fff" stroke-width="1.8" stroke-linecap="butt" stroke-linejoin="miter"/></svg>
<div class="rl" style="top:286px"></div>
<div class="il" style="top:286px"></div>
<span class="t c" style="left:227px;top:292px;letter-spacing:-0.106px">Meldingen - Opdrachtbon</span>
<span class="t c" style="left:447px;top:292px;letter-spacing:-0.2px">1. Meldingen</span>
<span class="t c" style="right:801px;top:292px">5088</span>
<svg class="ck" style="top:289px" viewBox="0 0 16 16"><rect width="16" height="16" fill="#fff"/><circle cx="8" cy="8" r="7.25" fill="url(#gGreen)" stroke="#57a724" stroke-width="1.3"/><ellipse cx="8" cy="4.9" rx="5" ry="3.3" fill="url(#gGloss)"/><path d="M4.7 8.6 L7.3 11.1 L12.2 6.5" fill="none" stroke="#fff" stroke-width="1.8" stroke-linecap="butt" stroke-linejoin="miter"/></svg>
<div class="rl" style="top:307px"></div>
<div class="il" style="top:307px"></div>
<span class="t c" style="left:227px;top:313px;letter-spacing:-0.147px">Meldingen - Gereedmeldbrief</span>
<span class="t c" style="left:447px;top:313px;letter-spacing:-0.2px">1. Meldingen</span>
<span class="t c" style="right:801px;top:313px">5088</span>
<svg class="ck" style="top:310px" viewBox="0 0 16 16"><rect width="16" height="16" fill="#fff"/><circle cx="8" cy="8" r="7.25" fill="url(#gGreen)" stroke="#57a724" stroke-width="1.3"/><ellipse cx="8" cy="4.9" rx="5" ry="3.3" fill="url(#gGloss)"/><path d="M4.7 8.6 L7.3 11.1 L12.2 6.5" fill="none" stroke="#fff" stroke-width="1.8" stroke-linecap="butt" stroke-linejoin="miter"/></svg>
<div class="rl" style="top:328px"></div>
<div class="il" style="top:328px"></div>
<div class="vl" style="left:223px;top:160px;height:169px"></div>
<div class="vl" style="left:442px;top:160px;height:169px"></div>
<div class="vl" style="left:562px;top:160px;height:169px"></div>
<div class="vl" style="left:642px;top:160px;height:169px"></div>
<div class="vl" style="left:723px;top:160px;height:169px"></div>
<svg class="abs" style="left:210px;top:337px" width="8" height="6" viewBox="0 0 8 6"><path d="M.9 .8 L4 4 L7.1 .8" fill="none" stroke="#3f5375" stroke-width="1.9"/></svg>
<span class="t b gt" style="top:334px;letter-spacing:0.111px">1. Totaal rapporten</span>
<div class="gl" style="top:349px"></div>
<div class="il" style="top:349px"></div>
<div class="selbg" style="top:350px"></div>
<span class="t b c" style="left:228px;top:355px;letter-spacing:0.135px">TOTAAL - Samengesteld rapport #1</span>
<span class="t c" style="left:447px;top:355px;letter-spacing:0.14px">1. Totaal rapporten</span>
<span class="t c" style="right:801px;top:355px">1</span>
<svg class="ck" style="top:352px" viewBox="0 0 16 16"><rect width="16" height="16" fill="#fff"/><circle cx="8" cy="8" r="7.25" fill="url(#gGreen)" stroke="#57a724" stroke-width="1.3"/><ellipse cx="8" cy="4.9" rx="5" ry="3.3" fill="url(#gGloss)"/><path d="M4.7 8.6 L7.3 11.1 L12.2 6.5" fill="none" stroke="#fff" stroke-width="1.8" stroke-linecap="butt" stroke-linejoin="miter"/></svg>
<div class="rl" style="top:370px"></div>
<div class="il" style="top:370px"></div>
<div class="selbg" style="top:371px"></div>
<span class="t b c" style="left:228px;top:376px;letter-spacing:0.135px">TOTAAL - Samengesteld rapport #2</span>
<span class="t c" style="left:447px;top:376px;letter-spacing:0.14px">1. Totaal rapporten</span>
<span class="t c" style="right:801px;top:376px">2</span>
<svg class="ck" style="top:373px" viewBox="0 0 16 16"><rect width="16" height="16" fill="#fff"/><circle cx="8" cy="8" r="7.25" fill="url(#gGreen)" stroke="#57a724" stroke-width="1.3"/><ellipse cx="8" cy="4.9" rx="5" ry="3.3" fill="url(#gGloss)"/><path d="M4.7 8.6 L7.3 11.1 L12.2 6.5" fill="none" stroke="#fff" stroke-width="1.8" stroke-linecap="butt" stroke-linejoin="miter"/></svg>
<div class="rl" style="top:391px"></div>
<div class="il" style="top:391px"></div>
<div class="selbg" style="top:392px"></div>
<span class="t b c" style="left:228px;top:397px;letter-spacing:0.135px">TOTAAL - Samengesteld rapport #3</span>
<span class="t c" style="left:447px;top:397px;letter-spacing:0.14px">1. Totaal rapporten</span>
<span class="t c" style="right:801px;top:397px">3</span>
<svg class="ck" style="top:394px" viewBox="0 0 16 16"><rect width="16" height="16" fill="#fff"/><circle cx="8" cy="8" r="7.25" fill="url(#gGreen)" stroke="#57a724" stroke-width="1.3"/><ellipse cx="8" cy="4.9" rx="5" ry="3.3" fill="url(#gGloss)"/><path d="M4.7 8.6 L7.3 11.1 L12.2 6.5" fill="none" stroke="#fff" stroke-width="1.8" stroke-linecap="butt" stroke-linejoin="miter"/></svg>
<div class="rl" style="top:412px"></div>
<div class="il" style="top:412px"></div>
<div class="selbg" style="top:413px"></div>
<span class="t b c" style="left:228px;top:418px;letter-spacing:0.135px">TOTAAL - Samengesteld rapport #4</span>
<span class="t c" style="left:447px;top:418px;letter-spacing:0.14px">1. Totaal rapporten</span>
<span class="t c" style="right:801px;top:418px">4</span>
<svg class="ck" style="top:415px" viewBox="0 0 16 16"><rect width="16" height="16" fill="#fff"/><circle cx="8" cy="8" r="7.25" fill="url(#gGreen)" stroke="#57a724" stroke-width="1.3"/><ellipse cx="8" cy="4.9" rx="5" ry="3.3" fill="url(#gGloss)"/><path d="M4.7 8.6 L7.3 11.1 L12.2 6.5" fill="none" stroke="#fff" stroke-width="1.8" stroke-linecap="butt" stroke-linejoin="miter"/></svg>
<div class="rl" style="top:433px"></div>
<div class="il" style="top:433px"></div>
<div class="selbg" style="top:434px"></div>
<span class="t b c" style="left:228px;top:439px;letter-spacing:0.135px">TOTAAL - Samengesteld rapport #5</span>
<span class="t c" style="left:447px;top:439px;letter-spacing:0.14px">1. Totaal rapporten</span>
<span class="t c" style="right:801px;top:439px">5</span>
<svg class="ck" style="top:436px" viewBox="0 0 16 16"><rect width="16" height="16" fill="#fff"/><circle cx="8" cy="8" r="7.25" fill="url(#gGreen)" stroke="#57a724" stroke-width="1.3"/><ellipse cx="8" cy="4.9" rx="5" ry="3.3" fill="url(#gGloss)"/><path d="M4.7 8.6 L7.3 11.1 L12.2 6.5" fill="none" stroke="#fff" stroke-width="1.8" stroke-linecap="butt" stroke-linejoin="miter"/></svg>
<div class="rl" style="top:454px"></div>
<div class="il" style="top:454px"></div>
<div class="selbg" style="top:455px"></div>
<span class="t b c" style="left:228px;top:460px;letter-spacing:0.135px">TOTAAL - Samengesteld rapport #6</span>
<span class="t c" style="left:447px;top:460px;letter-spacing:0.14px">1. Totaal rapporten</span>
<span class="t c" style="right:801px;top:460px">6</span>
<svg class="ck" style="top:457px" viewBox="0 0 16 16"><rect width="16" height="16" fill="#fff"/><circle cx="8" cy="8" r="7.25" fill="url(#gGreen)" stroke="#57a724" stroke-width="1.3"/><ellipse cx="8" cy="4.9" rx="5" ry="3.3" fill="url(#gGloss)"/><path d="M4.7 8.6 L7.3 11.1 L12.2 6.5" fill="none" stroke="#fff" stroke-width="1.8" stroke-linecap="butt" stroke-linejoin="miter"/></svg>
<div class="rl" style="top:475px"></div>
<div class="il" style="top:475px"></div>
<div class="selbg" style="top:476px"></div>
<span class="t b c" style="left:228px;top:481px;letter-spacing:0.135px">TOTAAL - Samengesteld rapport #7</span>
<span class="t c" style="left:447px;top:481px;letter-spacing:0.14px">1. Totaal rapporten</span>
<span class="t c" style="right:801px;top:481px">7</span>
<svg class="ck" style="top:478px" viewBox="0 0 16 16"><rect width="16" height="16" fill="#fff"/><circle cx="8" cy="8" r="7.25" fill="url(#gGreen)" stroke="#57a724" stroke-width="1.3"/><ellipse cx="8" cy="4.9" rx="5" ry="3.3" fill="url(#gGloss)"/><path d="M4.7 8.6 L7.3 11.1 L12.2 6.5" fill="none" stroke="#fff" stroke-width="1.8" stroke-linecap="butt" stroke-linejoin="miter"/></svg>
<div class="rl" style="top:496px"></div>
<div class="il" style="top:496px"></div>
<div class="selbg" style="top:497px"></div>
<span class="t b c" style="left:228px;top:502px;letter-spacing:0.135px">TOTAAL - Samengesteld rapport #8</span>
<span class="t c" style="left:447px;top:502px;letter-spacing:0.14px">1. Totaal rapporten</span>
<span class="t c" style="right:801px;top:502px">8</span>
<svg class="ck" style="top:499px" viewBox="0 0 16 16"><rect width="16" height="16" fill="#fff"/><circle cx="8" cy="8" r="7.25" fill="url(#gGreen)" stroke="#57a724" stroke-width="1.3"/><ellipse cx="8" cy="4.9" rx="5" ry="3.3" fill="url(#gGloss)"/><path d="M4.7 8.6 L7.3 11.1 L12.2 6.5" fill="none" stroke="#fff" stroke-width="1.8" stroke-linecap="butt" stroke-linejoin="miter"/></svg>
<div class="rl" style="top:517px"></div>
<div class="il" style="top:517px"></div>
<div class="selbg" style="top:518px"></div>
<span class="t b c" style="left:228px;top:523px;letter-spacing:0.135px">TOTAAL - Samengesteld rapport #9</span>
<span class="t c" style="left:447px;top:523px;letter-spacing:0.14px">1. Totaal rapporten</span>
<span class="t c" style="right:801px;top:523px">9</span>
<svg class="ck" style="top:520px" viewBox="0 0 16 16"><rect width="16" height="16" fill="#fff"/><circle cx="8" cy="8" r="7.25" fill="url(#gGreen)" stroke="#57a724" stroke-width="1.3"/><ellipse cx="8" cy="4.9" rx="5" ry="3.3" fill="url(#gGloss)"/><path d="M4.7 8.6 L7.3 11.1 L12.2 6.5" fill="none" stroke="#fff" stroke-width="1.8" stroke-linecap="butt" stroke-linejoin="miter"/></svg>
<div class="rl" style="top:538px"></div>
<div class="il" style="top:538px"></div>
<div class="selbg" style="top:539px"></div>
<span class="t b c" style="left:228px;top:544px;letter-spacing:0.159px">TOTAAL - Samengesteld rapport #10</span>
<span class="t c" style="left:447px;top:544px;letter-spacing:0.14px">1. Totaal rapporten</span>
<span class="t c" style="right:801px;top:544px">10</span>
<svg class="ck" style="top:541px" viewBox="0 0 16 16"><rect width="16" height="16" fill="#fff"/><circle cx="8" cy="8" r="7.25" fill="url(#gGreen)" stroke="#57a724" stroke-width="1.3"/><ellipse cx="8" cy="4.9" rx="5" ry="3.3" fill="url(#gGloss)"/><path d="M4.7 8.6 L7.3 11.1 L12.2 6.5" fill="none" stroke="#fff" stroke-width="1.8" stroke-linecap="butt" stroke-linejoin="miter"/></svg>
<div class="rl" style="top:559px"></div>
<div class="il" style="top:559px"></div>
<span class="t c" style="left:227px;top:565px;letter-spacing:-0.172px">TOTAAL - Aankoopkeuring</span>
<span class="t c" style="left:447px;top:565px;letter-spacing:0.14px">1. Totaal rapporten</span>
<span class="t c" style="right:801px;top:565px">801</span>
<svg class="ck" style="top:562px" viewBox="0 0 16 16"><rect width="16" height="16" fill="#fff"/><circle cx="8" cy="8" r="7.25" fill="url(#gGreen)" stroke="#57a724" stroke-width="1.3"/><ellipse cx="8" cy="4.9" rx="5" ry="3.3" fill="url(#gGloss)"/><path d="M4.7 8.6 L7.3 11.1 L12.2 6.5" fill="none" stroke="#fff" stroke-width="1.8" stroke-linecap="butt" stroke-linejoin="miter"/></svg>
<div class="rl" style="top:580px"></div>
<div class="il" style="top:580px"></div>
<span class="t c" style="left:227px;top:586px;letter-spacing:-0.162px">TOTAAL - AWK Rapportage</span>
<span class="t c" style="left:447px;top:586px;letter-spacing:0.14px">1. Totaal rapporten</span>
<span class="t c" style="right:801px;top:586px">802</span>
<svg class="ck" style="top:583px" viewBox="0 0 16 16"><rect width="16" height="16" fill="#fff"/><circle cx="8" cy="8" r="7.25" fill="url(#gGreen)" stroke="#57a724" stroke-width="1.3"/><ellipse cx="8" cy="4.9" rx="5" ry="3.3" fill="url(#gGloss)"/><path d="M4.7 8.6 L7.3 11.1 L12.2 6.5" fill="none" stroke="#fff" stroke-width="1.8" stroke-linecap="butt" stroke-linejoin="miter"/></svg>
<div class="rl" style="top:601px"></div>
<div class="il" style="top:601px"></div>
<span class="t c" style="left:227px;top:607px;letter-spacing:-0.153px">TOTAAL - Meerjarenplan</span>
<span class="t c" style="left:447px;top:607px;letter-spacing:0.14px">1. Totaal rapporten</span>
<span class="t c" style="right:801px;top:607px">803</span>
<svg class="ck" style="top:604px" viewBox="0 0 16 16"><rect width="16" height="16" fill="#fff"/><circle cx="8" cy="8" r="7.25" fill="url(#gGreen)" stroke="#57a724" stroke-width="1.3"/><ellipse cx="8" cy="4.9" rx="5" ry="3.3" fill="url(#gGloss)"/><path d="M4.7 8.6 L7.3 11.1 L12.2 6.5" fill="none" stroke="#fff" stroke-width="1.8" stroke-linecap="butt" stroke-linejoin="miter"/></svg>
<div class="rl" style="top:622px"></div>
<div class="il" style="top:622px"></div>
<span class="t c" style="left:227px;top:628px;letter-spacing:-0.323px">TOTAAL - NEN 2767</span>
<span class="t c" style="left:447px;top:628px;letter-spacing:0.14px">1. Totaal rapporten</span>
<span class="t c" style="right:801px;top:628px">804</span>
<svg class="ck" style="top:625px" viewBox="0 0 16 16"><rect width="16" height="16" fill="#fff"/><circle cx="8" cy="8" r="7.25" fill="url(#gGreen)" stroke="#57a724" stroke-width="1.3"/><ellipse cx="8" cy="4.9" rx="5" ry="3.3" fill="url(#gGloss)"/><path d="M4.7 8.6 L7.3 11.1 L12.2 6.5" fill="none" stroke="#fff" stroke-width="1.8" stroke-linecap="butt" stroke-linejoin="miter"/></svg>
<div class="rl" style="top:643px"></div>
<div class="il" style="top:643px"></div>
<span class="t c" style="left:227px;top:649px;letter-spacing:-0.347px">TOTAAL - NEN 3140</span>
<span class="t c" style="left:447px;top:649px;letter-spacing:0.14px">1. Totaal rapporten</span>
<span class="t c" style="right:801px;top:649px">805</span>
<svg class="ck" style="top:646px" viewBox="0 0 16 16"><rect width="16" height="16" fill="#fff"/><circle cx="8" cy="8" r="7.25" fill="url(#gGreen)" stroke="#57a724" stroke-width="1.3"/><ellipse cx="8" cy="4.9" rx="5" ry="3.3" fill="url(#gGloss)"/><path d="M4.7 8.6 L7.3 11.1 L12.2 6.5" fill="none" stroke="#fff" stroke-width="1.8" stroke-linecap="butt" stroke-linejoin="miter"/></svg>
<div class="rl" style="top:664px"></div>
<div class="il" style="top:664px"></div>
<span class="t c" style="left:227px;top:670px;letter-spacing:-0.347px">TOTAAL - NEN 6059</span>
<span class="t c" style="left:447px;top:670px;letter-spacing:0.14px">1. Totaal rapporten</span>
<span class="t c" style="right:801px;top:670px">806</span>
<svg class="ck" style="top:667px" viewBox="0 0 16 16"><rect width="16" height="16" fill="#fff"/><circle cx="8" cy="8" r="7.25" fill="url(#gGreen)" stroke="#57a724" stroke-width="1.3"/><ellipse cx="8" cy="4.9" rx="5" ry="3.3" fill="url(#gGloss)"/><path d="M4.7 8.6 L7.3 11.1 L12.2 6.5" fill="none" stroke="#fff" stroke-width="1.8" stroke-linecap="butt" stroke-linejoin="miter"/></svg>
<div class="rl" style="top:685px"></div>
<div class="il" style="top:685px"></div>
<div class="vl" style="left:223px;top:349px;height:337px"></div>
<div class="vl" style="left:442px;top:349px;height:337px"></div>
<div class="vl" style="left:562px;top:349px;height:337px"></div>
<div class="vl" style="left:642px;top:349px;height:337px"></div>
<div class="vl" style="left:723px;top:349px;height:337px"></div>
<svg class="abs" style="left:210px;top:694px" width="8" height="6" viewBox="0 0 8 6"><path d="M.9 .8 L4 4 L7.1 .8" fill="none" stroke="#3f5375" stroke-width="1.9"/></svg>
<span class="t b gt" style="top:691px;letter-spacing:-0.016px">2. Gebouwdossier</span>
<div class="gl" style="top:706px"></div>
<div class="il" style="top:706px"></div>
<span class="t c" style="left:227px;top:712px;letter-spacing:0.082px">Inventaris - Inventarislijst (uitgebreid)</span>
<span class="t c" style="left:447px;top:712px;letter-spacing:-0.154px">2. Gebouwdossier</span>
<span class="t c" style="right:801px;top:712px">5074</span>
<svg class="ck" style="top:709px" viewBox="0 0 16 16"><rect width="16" height="16" fill="#fff"/><circle cx="8" cy="8" r="7.25" fill="url(#gGreen)" stroke="#57a724" stroke-width="1.3"/><ellipse cx="8" cy="4.9" rx="5" ry="3.3" fill="url(#gGloss)"/><path d="M4.7 8.6 L7.3 11.1 L12.2 6.5" fill="none" stroke="#fff" stroke-width="1.8" stroke-linecap="butt" stroke-linejoin="miter"/></svg>
<div class="rl" style="top:727px"></div>
<div class="il" style="top:727px"></div>
<span class="t c" style="left:227px;top:733px;letter-spacing:-0.143px">Documenten - Documentenlijst</span>
<span class="t c" style="left:447px;top:733px;letter-spacing:-0.154px">2. Gebouwdossier</span>
<span class="t c" style="right:801px;top:733px">5074</span>
<svg class="ck" style="top:730px" viewBox="0 0 16 16"><rect width="16" height="16" fill="#fff"/><circle cx="8" cy="8" r="7.25" fill="url(#gGreen)" stroke="#57a724" stroke-width="1.3"/><ellipse cx="8" cy="4.9" rx="5" ry="3.3" fill="url(#gGloss)"/><path d="M4.7 8.6 L7.3 11.1 L12.2 6.5" fill="none" stroke="#fff" stroke-width="1.8" stroke-linecap="butt" stroke-linejoin="miter"/></svg>
<div class="rl" style="top:748px"></div>
<div class="il" style="top:748px"></div>
<div class="vl" style="left:223px;top:706px;height:43px"></div>
<div class="vl" style="left:442px;top:706px;height:43px"></div>
<div class="vl" style="left:562px;top:706px;height:43px"></div>
<div class="vl" style="left:642px;top:706px;height:43px"></div>
<div class="vl" style="left:723px;top:706px;height:43px"></div>
<svg class="abs" style="left:210px;top:757px" width="8" height="6" viewBox="0 0 8 6"><path d="M.9 .8 L4 4 L7.1 .8" fill="none" stroke="#3f5375" stroke-width="1.9"/></svg>
<span class="t b gt" style="top:754px;letter-spacing:0.014px">2. Veelgebruikte rapporten</span>
<div class="gl" style="top:769px"></div>
<div class="il" style="top:769px"></div>
<span class="t c" style="left:227px;top:775px;letter-spacing:-0.05px">Jaarplan</span>
<span class="t c" style="left:447px;top:775px;letter-spacing:-0.008px">2. Veelgebruikte rap…</span>
<span class="t c" style="right:801px;top:775px">10</span>
<svg class="ck" style="top:772px" viewBox="0 0 16 16"><rect width="16" height="16" fill="#fff"/><circle cx="8" cy="8" r="7.25" fill="url(#gGreen)" stroke="#57a724" stroke-width="1.3"/><ellipse cx="8" cy="4.9" rx="5" ry="3.3" fill="url(#gGloss)"/><path d="M4.7 8.6 L7.3 11.1 L12.2 6.5" fill="none" stroke="#fff" stroke-width="1.8" stroke-linecap="butt" stroke-linejoin="miter"/></svg>
<div class="rl" style="top:790px"></div>
<div class="il" style="top:790px"></div>
<span class="t c" style="left:227px;top:796px;letter-spacing:-0.099px">Elementenlijst</span>
<span class="t c" style="left:447px;top:796px;letter-spacing:-0.008px">2. Veelgebruikte rap…</span>
<span class="t c" style="right:801px;top:796px">20</span>
<svg class="ck" style="top:793px" viewBox="0 0 16 16"><rect width="16" height="16" fill="#fff"/><circle cx="8" cy="8" r="7.25" fill="url(#gGreen)" stroke="#57a724" stroke-width="1.3"/><ellipse cx="8" cy="4.9" rx="5" ry="3.3" fill="url(#gGloss)"/><path d="M4.7 8.6 L7.3 11.1 L12.2 6.5" fill="none" stroke="#fff" stroke-width="1.8" stroke-linecap="butt" stroke-linejoin="miter"/></svg>
<div class="rl" style="top:811px"></div>
<div class="il" style="top:811px"></div>
<span class="t c" style="left:227px;top:817px;letter-spacing:-0.03px">Elementenlijst met prioriteit</span>
<span class="t c" style="left:447px;top:817px;letter-spacing:-0.008px">2. Veelgebruikte rap…</span>
<span class="t c" style="right:801px;top:817px">20</span>
<svg class="ck" style="top:814px" viewBox="0 0 16 16"><rect width="16" height="16" fill="#fff"/><circle cx="8" cy="8" r="7.25" fill="url(#gGreen)" stroke="#57a724" stroke-width="1.3"/><ellipse cx="8" cy="4.9" rx="5" ry="3.3" fill="url(#gGloss)"/><path d="M4.7 8.6 L7.3 11.1 L12.2 6.5" fill="none" stroke="#fff" stroke-width="1.8" stroke-linecap="butt" stroke-linejoin="miter"/></svg>
<div class="rl" style="top:832px"></div>
<div class="il" style="top:832px"></div>
<span class="t c" style="left:227px;top:838px;letter-spacing:-0.16px">Bevindingen</span>
<span class="t c" style="left:447px;top:838px;letter-spacing:-0.008px">2. Veelgebruikte rap…</span>
<span class="t c" style="right:801px;top:838px">30</span>
<svg class="ck" style="top:835px" viewBox="0 0 16 16"><rect width="16" height="16" fill="#fff"/><circle cx="8" cy="8" r="7.25" fill="url(#gGreen)" stroke="#57a724" stroke-width="1.3"/><ellipse cx="8" cy="4.9" rx="5" ry="3.3" fill="url(#gGloss)"/><path d="M4.7 8.6 L7.3 11.1 L12.2 6.5" fill="none" stroke="#fff" stroke-width="1.8" stroke-linecap="butt" stroke-linejoin="miter"/></svg>
<div class="rl" style="top:853px"></div>
<div class="il" style="top:853px"></div>
<span class="t c" style="left:227px;top:859px;letter-spacing:-0.08px">Voorblad</span>
<span class="t c" style="left:447px;top:859px;letter-spacing:-0.008px">2. Veelgebruikte rap…</span>
<span class="t c" style="right:801px;top:859px">36</span>
<svg class="ck" style="top:856px" viewBox="0 0 16 16"><rect width="16" height="16" fill="#fff"/><circle cx="8" cy="8" r="7.25" fill="url(#gGreen)" stroke="#57a724" stroke-width="1.3"/><ellipse cx="8" cy="4.9" rx="5" ry="3.3" fill="url(#gGloss)"/><path d="M4.7 8.6 L7.3 11.1 L12.2 6.5" fill="none" stroke="#fff" stroke-width="1.8" stroke-linecap="butt" stroke-linejoin="miter"/></svg>
<div class="rl" style="top:874px"></div>
<div class="il" style="top:874px"></div>
<span class="t c" style="left:227px;top:880px;letter-spacing:-0.032px">Inleiding</span>
<span class="t c" style="left:447px;top:880px;letter-spacing:-0.008px">2. Veelgebruikte rap…</span>
<span class="t c" style="right:801px;top:880px">36</span>
<svg class="ck" style="top:877px" viewBox="0 0 16 16"><rect width="16" height="16" fill="#fff"/><circle cx="8" cy="8" r="7.25" fill="url(#gGreen)" stroke="#57a724" stroke-width="1.3"/><ellipse cx="8" cy="4.9" rx="5" ry="3.3" fill="url(#gGloss)"/><path d="M4.7 8.6 L7.3 11.1 L12.2 6.5" fill="none" stroke="#fff" stroke-width="1.8" stroke-linecap="butt" stroke-linejoin="miter"/></svg>
<div class="rl" style="top:895px"></div>
<div class="il" style="top:895px"></div>
<span class="t c" style="left:227px;top:901px;letter-spacing:0.007px">N-jaren begroting (ingedikt)</span>
<span class="t c" style="left:447px;top:901px;letter-spacing:-0.008px">2. Veelgebruikte rap…</span>
<span class="t c" style="right:801px;top:901px">45</span>
<svg class="ck" style="top:898px" viewBox="0 0 16 16"><rect width="16" height="16" fill="#fff"/><circle cx="8" cy="8" r="7.25" fill="url(#gGreen)" stroke="#57a724" stroke-width="1.3"/><ellipse cx="8" cy="4.9" rx="5" ry="3.3" fill="url(#gGloss)"/><path d="M4.7 8.6 L7.3 11.1 L12.2 6.5" fill="none" stroke="#fff" stroke-width="1.8" stroke-linecap="butt" stroke-linejoin="miter"/></svg>
<div class="rl" style="top:916px"></div>
<div class="il" style="top:916px"></div>
<div class="vl" style="left:223px;top:769px;height:148px"></div>
<div class="vl" style="left:442px;top:769px;height:148px"></div>
<div class="vl" style="left:562px;top:769px;height:148px"></div>
<div class="vl" style="left:642px;top:769px;height:148px"></div>
<div class="vl" style="left:723px;top:769px;height:148px"></div>
<div class="vl" style="left:223px;top:917px;height:2px"></div>
<div class="vl" style="left:442px;top:917px;height:2px"></div>
<div class="vl" style="left:562px;top:917px;height:2px"></div>
<div class="vl" style="left:642px;top:917px;height:2px"></div>
<div class="vl" style="left:723px;top:917px;height:2px"></div>
<svg class="abs" style="left:193px;top:398px" width="5" height="9" viewBox="0 0 5 9"><path d="M0 0 L5 4.5 L0 9z" fill="#000"/></svg>
<div class="abs" style="left:643px;top:392px;width:80px;height:20px;border:1px dotted #000"></div>
<div id="sb"></div><div id="thumb"></div>
<svg class="abs" style="left:1390px;top:146px" width="9" height="5" viewBox="0 0 9 5"><path d="M4.5 0 L9 5 H0z" fill="#4d5f80"/></svg>
<svg class="abs" style="left:1390px;top:908px" width="9" height="5" viewBox="0 0 9 5"><path d="M0 0 H9 L4.5 5z" fill="#4d5f80"/></svg>
<div class="abs" style="left:1391px;top:289px;width:7px;height:1px;background:#8ea6c8"></div>
<div class="abs" style="left:1391px;top:291px;width:7px;height:1px;background:#8ea6c8"></div>
<div class="abs" style="left:1391px;top:293px;width:7px;height:1px;background:#8ea6c8"></div>
<div class="abs" style="left:1391px;top:295px;width:7px;height:1px;background:#8ea6c8"></div>
<div id="dstrip"></div><div id="dtab"></div>
<span class="t" style="left:1411px;top:130px;font-size:11px;color:#0f1a33;writing-mode:vertical-rl;line-height:12px;letter-spacing:.15px">Details</span>
<div id="ctx"></div>
<div class="abs" style="left:1133px;top:409px;width:1px;height:51px;background:#dfe2e6"></div>
<div class="abs" style="left:1139px;top:458px;width:171px;height:0;background:repeating-linear-gradient(90deg,#c3c7cd 0,#c3c7cd 2px,transparent 2px,transparent 4px);height:1px"></div>
<div class="abs" style="left:1106px;top:461px;width:205px;height:23px;border:1px solid #ecc24f;border-radius:3px;background:linear-gradient(#fdefbd 0,#fbe194 40%,#f8d670 58%,#fbe5a0 100%);box-shadow:inset 0 0 0 1px #fff5d2"></div>
<span class="t cm" style="left:1139px;top:415px;letter-spacing:.1px">Controleer rapporten</span><span class="t cm" style="left:1274px;top:415px;letter-spacing:-.6px">F3</span>
<span class="t cm" style="left:1139px;top:439px">Wissel layout</span><span class="t cm" style="left:1274px;top:439px;letter-spacing:-.6px">F8</span>
<span class="t cm" style="left:1139px;top:466px;letter-spacing:-.15px">Rapport samenstellen</span>
<div id="status"></div>
<span class="t st" style="left:20px;letter-spacing:-.1px">Uitgevoerd in 0,052 seconden</span>
<div class="vsep" style="left:405px"></div>
<div class="vsep" style="left:412px"></div>
<div class="vsep" style="left:497px"></div>
<div class="vsep" style="left:697px"></div>
<div class="vsep" style="left:704px"></div>
<div class="abs" style="left:420px;top:932px;width:70px;height:14px;border:1px solid #9db4d2;background:linear-gradient(#f3f7fc,#dde7f4)"><div style="position:absolute;left:0;top:0;width:3px;height:12px;background:#b9d0ee"></div></div>
<span class="t st" style="left:541px;letter-spacing:.05px">Erik ter Burg - Administrator</span>
<span class="t st" style="left:1353px;letter-spacing:-.15px">Plandatis BV</span>
<div class="vsep" style="left:1427px"></div>
</body></html>
